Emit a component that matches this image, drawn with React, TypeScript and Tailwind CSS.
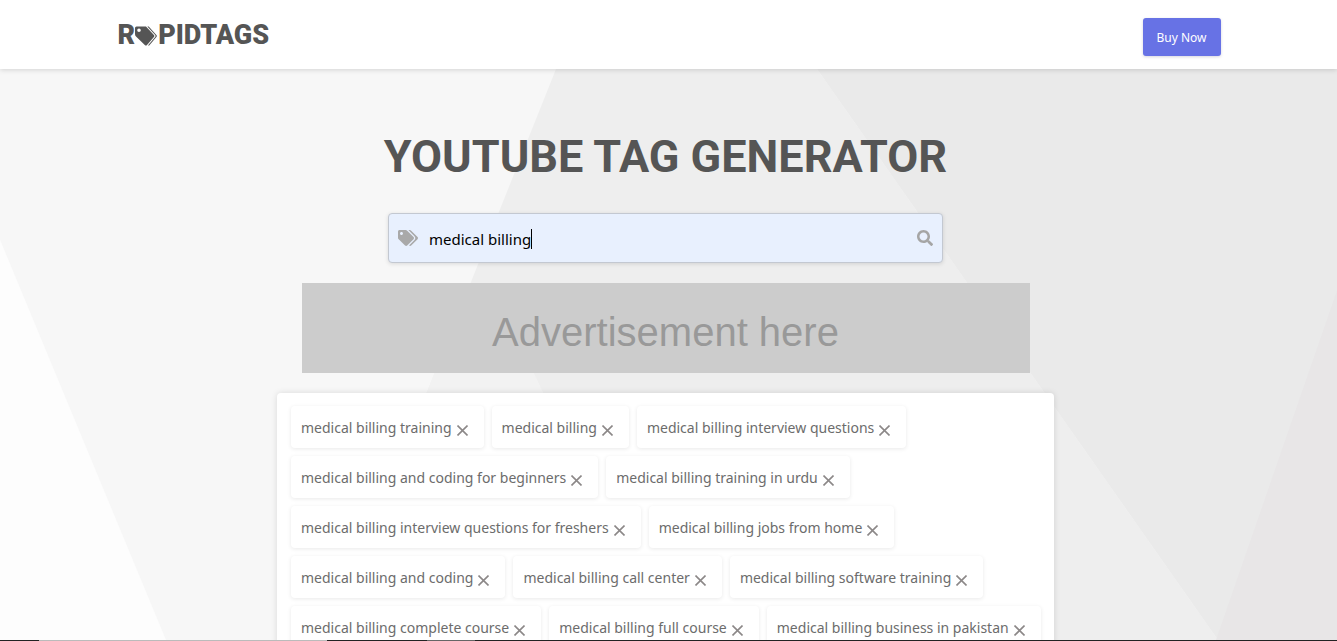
import { useState } from "react"
import { FaSearch, FaTags } from "react-icons/fa"

const initialTags: string[] = [
  "medical billing training",
  "medical billing",
  "medical billing interview questions",
  "medical billing and coding for beginners",
  "medical billing training in urdu",
  "medical billing interview questions for freshers",
  "medical billing jobs from home",
  "medical billing and coding",
  "medical billing call center",
  "medical billing software training",
  "medical billing complete course",
  "medical billing full course",
  "medical billing business in pakistan",
]

interface TagChipProps {
  label: string
  onRemove: () => void
}

function TagChip({ label, onRemove }: TagChipProps) {
  return (
    <li className="flex h-[42px] items-center rounded-sm bg-white pl-2.5 pr-4 shadow-[0_1px_4px_rgba(0,0,0,0.09)]">
      <span className="whitespace-nowrap pt-px text-sm text-[#6c6c6c]">{label}</span>
      <button type="button" aria-label={`Remove ${label}`} onClick={onRemove} className="ml-[5px] mt-1.5 cursor-pointer">
        <svg viewBox="0 0 11 11" className="h-[11px] w-[11px]" fill="none" stroke="#8c8888" strokeWidth="1.6">
          <path d="M0.5 0.5 L10.5 10.5 M10.5 0.5 L0.5 10.5" />
        </svg>
      </button>
    </li>
  )
}

function LogoTag() {
  return (
    <svg aria-hidden="true" viewBox="0 0 22 20" className="mr-px h-5 w-[22px]" fill="currentColor">
      <path
        fillRule="evenodd"
        d="M1.5 0.5H11L18.9 9Q19.8 10 18.9 11L12 19Q10.9 20.2 9.8 19L1 10.5Q0 9.5 0 8V2Q0 0.5 1.5 0.5ZM4 2.4A1.8 1.8 0 1 0 4 6A1.8 1.8 0 1 0 4 2.4Z"
      />
      <path d="M12.3 0.5H13.7L21.4 9Q22.3 10 21.4 11L14.2 19.5H12.9L20.2 11Q20.9 10 20.2 9Z" />
    </svg>
  )
}

function Backdrop() {
  return (
    <svg
      aria-hidden="true"
      viewBox="0 0 1337 572"
      preserveAspectRatio="none"
      className="absolute inset-0 h-full w-full"
    >
      <rect width="1337" height="572" fill="#f7f7f7" />
      <polygon points="0,171 166,572 0,572" fill="#fdfdfd" />
      <polygon points="556,0 817,0 1218,572 328,572" fill="#eeeeee" />
      <polygon points="447,273 519,273 660,572 328,572" fill="#f2f2f2" />
      <polygon points="817,0 1337,0 1337,572 1218,572" fill="#eaeaea" />
      <polygon points="1337,222 1337,572 1216,572" fill="#e8e6e7" />
    </svg>
  )
}

export default function App() {
  const [tags, setTags] = useState<string[]>(initialTags)
  const [query, setQuery] = useState("medical billing")

  return (
    <div className="flex h-screen flex-col overflow-hidden bg-[#f7f7f7] font-['Noto_Sans',sans-serif]">
      {/* Header */}
      <header className="relative z-10 shrink-0 bg-white shadow-[0_1px_5px_rgba(0,0,0,0.15)]">
        <div className="mx-auto flex h-[69px] max-w-[1104px] items-center justify-between">
          <a
            href="#"
            aria-label="Rapidtags"
            className="flex items-center pl-px pt-0.5 font-['Roboto',sans-serif] text-[27px] font-black leading-none text-[#555]"
          >
            <span>R</span>
            <LogoTag />
            <span>PIDTAGS</span>
          </a>
          <button
            type="button"
            className="mt-1 h-[38px] w-[78px] cursor-pointer rounded-[3px] bg-[#6772e5] pt-0.5 text-xs text-white shadow-[0_1px_3px_rgba(50,50,93,0.2)]"
          >
            Buy Now
          </button>
        </div>
      </header>

      <main className="relative min-h-0 flex-1 overflow-hidden">
        <Backdrop />

        <div className="relative flex flex-col items-center pr-1.5 pt-16">
          <h1 className="font-['Roboto',sans-serif] text-[45px] font-bold leading-[48px] text-[#555]">
            YOUTUBE TAG GENERATOR
          </h1>

          {/* Search */}
          <form
            role="search"
            onSubmit={(e) => e.preventDefault()}
            className="relative mt-8 flex h-[50px] w-full max-w-[555px] items-center rounded border border-[#c3c8d1] bg-[#e8f0fe] px-[9px] shadow-[0_1px_4px_rgba(0,0,0,0.12)]"
          >
            <FaTags className="h-4 w-5 shrink-0 text-[#a9a9a9]" />
            <input
              type="text"
              aria-label="Video title or keyword"
              value={query}
              onChange={(e) => setQuery(e.target.value)}
              className="mx-[11px] mt-0.5 min-w-0 flex-1 bg-transparent text-[15px] text-black caret-transparent outline-none"
            />
            {/* Caret */}
            {query === "medical billing" && <span className="absolute left-[142px] top-[15px] h-5 w-px bg-black" />}
            <button type="submit" aria-label="Search" className="shrink-0 cursor-pointer">
              <FaSearch className="h-4 w-4 text-[#a5a5a5]" />
            </button>
          </form>

          {/* Banner */}
          <div className="mt-5 flex h-[90px] w-full max-w-[728px] items-center justify-center bg-[#ccc] pt-2 font-['Liberation_Sans',sans-serif] text-[40px] leading-none text-[#999]">
            Advertisement here
          </div>

          {/* Generated tags */}
          <ul className="mt-5 flex w-full max-w-[777px] flex-wrap gap-2 rounded bg-white pb-6 pl-3.5 pr-2 pt-[13px] shadow-[0_0_6px_rgba(0,0,0,0.12)]">
            {tags.map((tag) => (
              <TagChip key={tag} label={tag} onRemove={() => setTags(tags.filter((t) => t !== tag))} />
            ))}
          </ul>
        </div>
      </main>

      {/* Bottom edge strip */}
      <div className="flex h-px shrink-0 bg-[#222]">
        <div className="ml-[39px] w-72 bg-[#bbb]" />
        <div className="ml-[100px] w-12 bg-[#666]" />
      </div>
    </div>
  )
}
